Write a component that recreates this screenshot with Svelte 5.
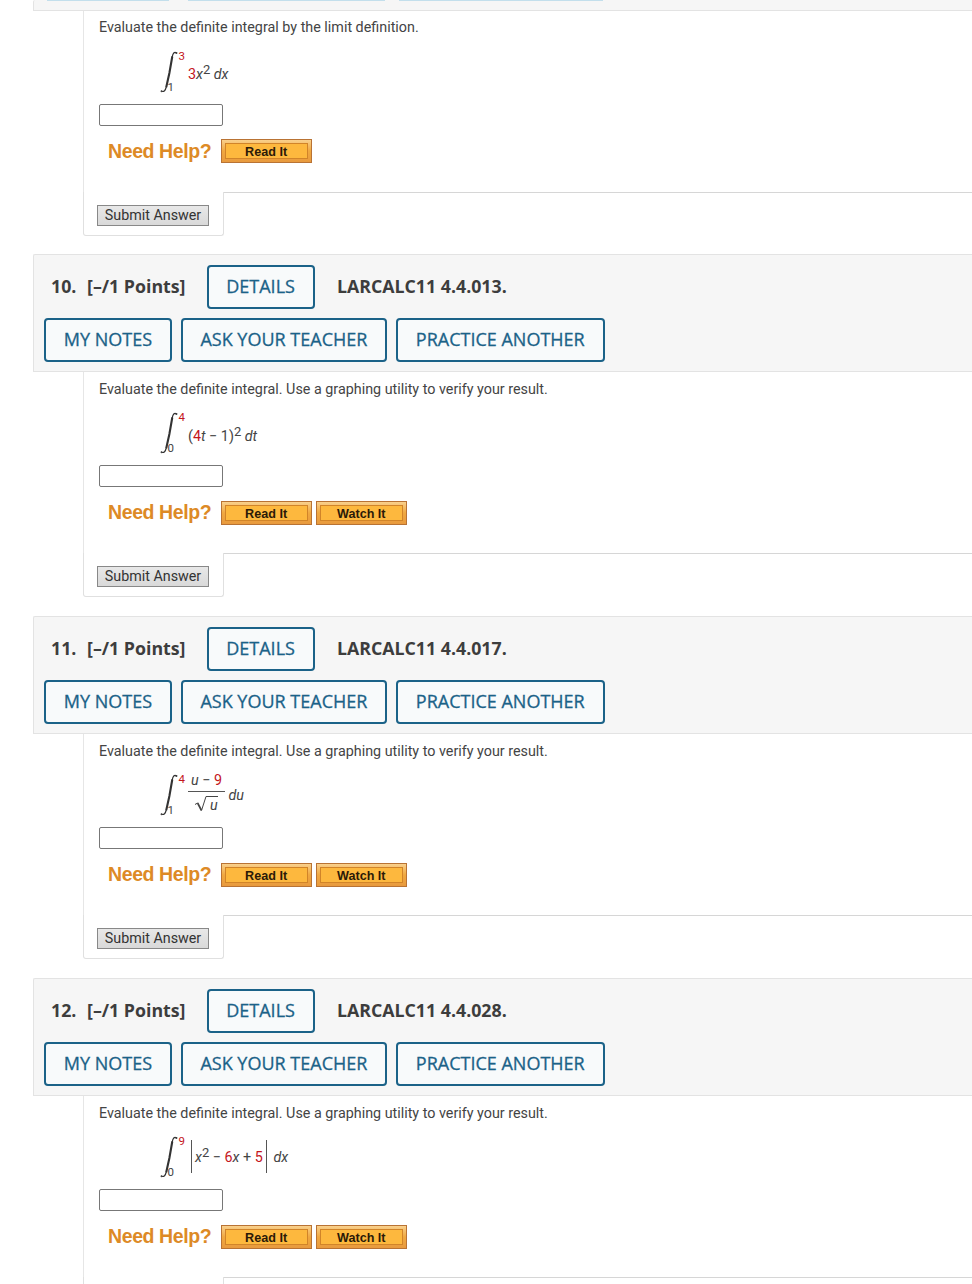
<script lang="ts">
    type Question = {
        number: number;
        code: string;
        prompt: string;
        lower: string;
        upper: string;
        kind: 'power' | 'binomial' | 'quotient' | 'absolute';
        help: string[];
    };

    const verify = 'Evaluate the definite integral. Use a graphing utility to verify your result.';

    const questions: Question[] = [
        { number: 9, code: '', prompt: 'Evaluate the definite integral by the limit definition.', lower: '1', upper: '3', kind: 'power', help: ['Read It'] },
        { number: 10, code: 'LARCALC11 4.4.013.', prompt: verify, lower: '0', upper: '4', kind: 'binomial', help: ['Read It', 'Watch It'] },
        { number: 11, code: 'LARCALC11 4.4.017.', prompt: verify, lower: '1', upper: '4', kind: 'quotient', help: ['Read It', 'Watch It'] },
        { number: 12, code: 'LARCALC11 4.4.028.', prompt: verify, lower: '0', upper: '9', kind: 'absolute', help: ['Read It', 'Watch It'] },
    ];
</script>

<main class="page">
    {#each questions as q, i}
        <section class="question">
            {#if q.code}
                <header class="header">
                    <div class="row">
                        <span class="points"><span class="number">{q.number}.</span>[–/1 Points]</span>
                        <button class="action details">DETAILS</button>
                        <span class="code">{q.code}</span>
                    </div>
                    <div class="row">
                        <button class="action notes">MY NOTES</button>
                        <button class="action ask">ASK YOUR TEACHER</button>
                        <button class="action practice">PRACTICE ANOTHER</button>
                    </div>
                </header>
            {:else}
                <!-- header scrolled out of view, only its bottom edge shows -->
                <header class="header cut">
                    <span class="edge first"></span>
                    <span class="edge second"></span>
                    <span class="edge third"></span>
                </header>
            {/if}

            <div class="body">
                <p class="prompt">{q.prompt}</p>

                <div class="formula">
                    <div class="integral">
                        <svg width="20" height="42" viewBox="0 0 20 42">
                            <path class="stem" d="M12.2 6L9.4 22L6.4 35.5" />
                            <path class="hook" d="M16.6 1.9C14.2 .6 12.9 2.2 12.2 6M6.4 35.5C5.4 39.6 4 41.2 1.4 40.2" />
                            <circle cx="16.4" cy="2" r="1" />
                            <circle cx="1.6" cy="40.2" r="1" />
                        </svg>
                        <span class="upper">{q.upper}</span>
                        <span class="lower">{q.lower}</span>
                    </div>
                    {#if q.kind === 'power'}
                        <span class="expr"><b>3</b><i>x</i><sup>2</sup><i class="d">dx</i></span>
                    {:else if q.kind === 'binomial'}
                        <span class="expr">(<b>4</b><i>t</i> − 1)<sup>2</sup><i class="d">dt</i></span>
                    {:else if q.kind === 'quotient'}
                        <span class="fraction">
                            <span class="top"><i>u</i> − <b>9</b></span>
                            <span class="bottom">
                                <svg width="24" height="17" viewBox="0 0 24 17">
                                    <path d="M1 9.5L3.6 8" />
                                    <path class="thick" d="M3.6 8L7.5 15.5" />
                                    <path d="M7.5 15.5L12 1.5H24" />
                                </svg>
                                <i>u</i>
                            </span>
                        </span>
                        <span class="expr raised"><i class="d">du</i></span>
                    {:else}
                        <span class="bars"><i>x</i><sup>2</sup> − <b>6</b><i>x</i> + <b>5</b></span>
                        <span class="expr raised"><i class="d">dx</i></span>
                    {/if}
                </div>

                <input class="answer" type="text" aria-label="Answer" />

                <div class="help">
                    <span class="need">Need Help?</span>
                    {#each q.help as label}
                        <button class="help-btn"><span>{label}</span></button>
                    {/each}
                </div>
            </div>

            <div class="footer">
                <div class="tab">
                    {#if i < questions.length - 1}
                        <button class="submit">Submit Answer</button>
                    {/if}
                </div>
                <div class="rule"></div>
            </div>
        </section>
    {/each}
</main>

<style>
    :global(body) { background: #fff; }

    .page {
        height: 1284px;
        overflow: hidden;
        font-family: Roboto, "Liberation Sans", sans-serif;
        font-size: 14.33px;
        color: #444;
    }

    button { font-family: inherit; padding: 0; margin: 0; }

    .question { height: 361.9px; }
    .question:first-child { height: 254.1px; }

    .header {
        box-sizing: border-box;
        height: 118.4px;
        margin-left: 33px;
        padding: 10px;
        border: 1px solid #e3e3e3;
        border-right: 0;
        border-radius: 2px 0 0 0;
        background: #f6f6f6;
        display: flex;
        flex-direction: column;
        gap: 9px;
        font-family: "Open Sans", "Noto Sans", sans-serif;
        font-size: 17.75px;
    }

    .cut {
        height: 11px;
        padding: 0;
        border-top: 0;
        flex-direction: row;
        gap: 0;
    }
    .edge { height: 1px; background: #c3dfec; }
    .first { width: 122px; margin-left: 13px; }
    .second { width: 197px; margin-left: 19px; }
    .third { width: 204px; margin-left: 14px; }

    .row { display: flex; flex: none; gap: 8.6px; height: 44px; align-items: center; }

    .points, .code {
        padding-bottom: 2px;
        font-weight: 700;
        color: #3d3d3d;
        white-space: nowrap;
    }
    .points { width: 147px; margin-left: 7px; }
    .number { display: inline-block; width: 36px; }
    .code { margin-left: 13.8px; }

    .action {
        box-sizing: border-box;
        height: 44px;
        padding-bottom: 2px;
        border: 2px solid #1b6288;
        border-radius: 4px;
        background: #f8fafb;
        color: #1b6288;
        font-size: 18px;
        -webkit-text-stroke: 0.3px #1b6288;
        white-space: nowrap;
    }
    .details { width: 108px; }
    .notes { width: 128px; }
    .ask { width: 206.6px; }
    .practice { width: 209px; }

    .body {
        box-sizing: border-box;
        height: 181px;
        margin-left: 83px;
        padding: 7px 0 0 15px;
        border-left: 1px solid #e6e6e6;
    }

    .prompt { margin: 0; padding-top: 0.4px; height: 17.6px; line-height: 18px; white-space: nowrap; }

    .formula {
        display: flex;
        height: 42px;
        margin: 15px 0 11px 61px;
        white-space: pre;
    }
    .formula b { font-weight: 400; color: #c4161c; }

    .integral { position: relative; width: 28px; }
    .integral path { fill: none; stroke: #333; stroke-linecap: round; }
    .integral circle { fill: #444; }
    .integral .stem { stroke-width: 2.1; }
    .integral .hook { stroke-width: 1.2; }
    .upper, .lower { position: absolute; font-size: 11.5px; line-height: 12px; }
    .upper { left: 18.5px; top: -1px; color: #c4161c; }
    .lower { left: 7.5px; top: 30px; }

    .expr { line-height: 18px; padding-top: 14.4px; }
    .raised { padding-top: 12px; }
    .d { margin-left: 3.5px; }
    sup { font-size: 13px; line-height: 0; vertical-align: 5px; }

    .fraction {
        display: flex;
        flex-direction: column;
        width: 37px;
        margin-top: -3.6px;
        text-align: center;
    }
    .top { height: 20px; line-height: 18px; border-bottom: 1px solid #555; }
    .bottom { display: flex; padding: 3px 0 0 6px; line-height: 20px; }
    .bottom svg { flex: none; margin-right: -8px; }
    .bottom path { fill: none; stroke: #444; stroke-width: 1; }
    .bottom .thick { stroke-width: 1.7; }

    .bars {
        box-sizing: border-box;
        height: 33px;
        width: 76px;
        margin: 4px 3px 0 3px;
        padding: 8px 0 0 3px;
        line-height: 18px;
        border: solid #555;
        border-width: 0 1px;
    }

    .answer {
        display: block;
        box-sizing: border-box;
        width: 124px;
        height: 22px;
        border: 1px solid #777;
        border-radius: 2px;
        background: #fff;
    }

    .help { display: flex; gap: 4px; height: 24px; margin-top: 13.3px; align-items: center; }
    .need {
        width: 108.5px;
        padding-left: 9px;
        font: 700 19.5px "Liberation Sans", Arial, sans-serif;
        letter-spacing: -0.4px;
        color: #dd8a26;
        white-space: nowrap;
    }
    .help-btn {
        box-sizing: border-box;
        width: 91.2px;
        height: 24px;
        padding: 3px;
        border: 1px solid #b97334;
        background: linear-gradient(#f9d08c, #f0a840 50%, #e89a3e);
        display: flex;
    }
    .help-btn span {
        flex: 1;
        border: 1px solid #d18429;
        background: #fdb83e;
        color: #2b1a08;
        font: 700 12.6px/16px "Liberation Sans", Arial, sans-serif;
    }

    .footer { display: flex; height: 44px; }
    .tab {
        box-sizing: border-box;
        width: 141px;
        margin-left: 83px;
        padding: 13px 0 0 13px;
        border: 1px solid #e0e0e0;
        border-top: 0;
        border-radius: 0 0 3px 3px;
    }
    .rule { flex: 1; border-top: 1px solid #d6d6d6; }
    .submit {
        display: block;
        box-sizing: border-box;
        width: 112px;
        height: 21px;
        border: 1px solid #888;
        background: linear-gradient(#e8e8e8, #d9d9d9);
        color: #333;
        font-size: 14.3px;
        line-height: 17px;
        white-space: nowrap;
    }
</style>
